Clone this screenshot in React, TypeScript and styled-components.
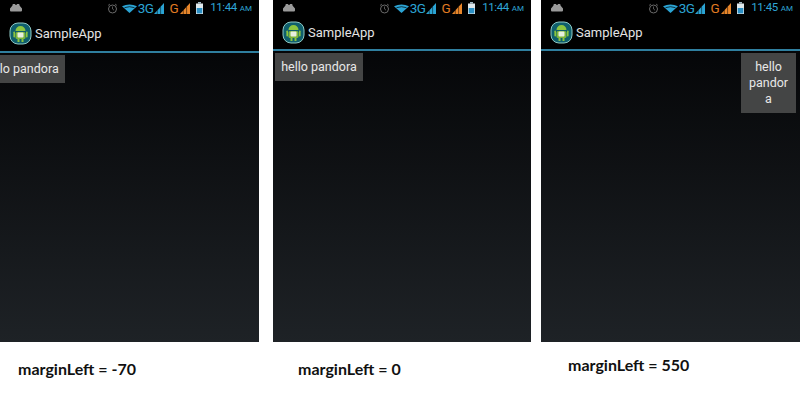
import React from 'react';
import styled, { createGlobalStyle } from 'styled-components';

const GlobalStyle = createGlobalStyle`
  html, body {
    margin: 0;
    padding: 0;
    background: #fff;
  }
`;

const Page = styled.div`
  width: 800px;
  height: 403px;
  overflow: hidden;
  display: flex;
  gap: 14px;
  background: #fff;
`;

const Column = styled.div<{ $width: number; $gap?: number }>`
  width: ${(p) => p.$width}px;
  flex: none;
  margin-right: ${(p) => p.$gap ?? 0}px;
`;

const Phone = styled.div`
  height: 342px;
  overflow: hidden;
  display: flex;
  flex-direction: column;
  background: #000;
  font-family: Roboto, 'Open Sans', sans-serif;
`;

const StatusBar = styled.div`
  height: 16px;
  flex: none;
  display: flex;
  align-items: center;
  padding: 0 7px 0 10px;
`;

const Bot = styled.svg`
  width: 12px;
  height: 8px;
  margin-right: auto;
`;

const StatusIcon = styled.svg<{ $left?: number }>`
  flex: none;
  margin-left: ${(p) => p.$left ?? 0}px;
`;

const NetLabel = styled.span<{ $color: string; $left: number }>`
  color: ${(p) => p.$color};
  font-size: 13.5px;
  line-height: 16px;
  letter-spacing: -0.5px;
  margin-left: ${(p) => p.$left}px;
`;

const Clock = styled.span`
  color: #2fa6d6;
  font-size: 11.5px;
  line-height: 16px;
  letter-spacing: -0.4px;
  margin-left: 7px;
`;

const Meridiem = styled.span`
  font-size: 8px;
  letter-spacing: 0;
  margin-left: 3px;
`;

const TitleBar = styled.div<{ $height: number; $left: number }>`
  height: ${(p) => p.$height}px;
  flex: none;
  display: flex;
  align-items: center;
  gap: 3px;
  padding-left: ${(p) => p.$left}px;
  border-bottom: 2px solid #2f7f9f;
  box-sizing: border-box;
`;

const Title = styled.span`
  color: #e4e4e4;
  font-size: 13px;
`;

const Content = styled.div`
  flex: 1;
  padding-top: 2px;
  background: linear-gradient(#050608, #1e2226);
`;

const Toast = styled.div<{ $left: number; $width: number }>`
  width: ${(p) => p.$width}px;
  margin-left: ${(p) => p.$left}px;
  box-sizing: border-box;
  padding: 6px 5px;
  background: #444545;
  color: #e8e8e8;
  font-size: 12.5px;
  line-height: 16px;
  text-align: center;
  overflow-wrap: anywhere;
`;

const Caption = styled.div<{ $top: number; $left: number }>`
  padding: ${(p) => p.$top}px 0 0 ${(p) => p.$left}px;
  font-family: Lato, 'Open Sans', sans-serif;
  font-weight: 700;
  font-size: 16px;
  line-height: 18px;
  color: #111;
`;

const AppLogo = () => (
  <svg width="23" height="23" viewBox="0 0 23 23">
    <rect x="1" y="1" width="21" height="21" rx="8" fill="#0f5f6c" stroke="#8fc9c4" strokeWidth="1" />
    <path d="M6.500 9a5 5 0 0 1 10 0z" fill="#8cc63f" />
    <rect x="6.500" y="10" width="10" height="7" rx="1.500" fill="#7db53a" />
    <rect x="8.500" y="10.500" width="6" height="5" rx="1" fill="#e8efe0" />
    <rect x="4.400" y="9.500" width="1.600" height="6" rx="0.800" fill="#8cc63f" />
    <rect x="17" y="9.500" width="1.600" height="6" rx="0.800" fill="#8cc63f" />
    <rect x="8.500" y="17" width="2" height="3" fill="#8cc63f" />
    <rect x="12.500" y="17" width="2" height="3" fill="#8cc63f" />
  </svg>
);

const StatusIcons = ({ time }: { time: string }) => (
  <StatusBar>
    <Bot viewBox="0 0 12 8">
      <path d="M2.500 1.500a1.500 1.500 0 0 1 3 -.5h1a1.500 1.500 0 0 1 3 .5l2.500 3v2a1 1 0 0 1-1 1H1a1 1 0 0 1-1-1v-2z" fill="#9a9a9a" />
    </Bot>
    <StatusIcon width="11" height="11" viewBox="0 0 11 11">
      <circle cx="5.500" cy="6" r="4" fill="none" stroke="#6b6b6b" strokeWidth="1" />
      <path d="M5.500 3.500V6l1.500 1.200M1 2.500 3 1M10 2.500 8 1" fill="none" stroke="#6b6b6b" strokeWidth="0.800" />
    </StatusIcon>
    <StatusIcon $left={4} width="15" height="9" viewBox="0 0 15 9">
      <path d="M0 2.200Q7.500-1.200 15 2.200L7.500 9z" fill="#2ba4d4" />
      <path d="M2.500 3.700Q7.500 1.700 12.500 3.700" fill="none" stroke="#000" strokeWidth="0.700" />
    </StatusIcon>
    <NetLabel $color="#2ba4d4" $left={1}>3G</NetLabel>
    <StatusIcon $left={1} width="10" height="11" viewBox="0 0 10 11">
      <path d="M0 11 10 0v11z" fill="#2ba4d4" />
      <path d="M3.300 11V7M6.600 11V4" stroke="#000" strokeWidth="0.500" />
    </StatusIcon>
    <NetLabel $color="#e07b22" $left={5}>G</NetLabel>
    <StatusIcon $left={2} width="10" height="11" viewBox="0 0 10 11">
      <path d="M0 11 10 0v11z" fill="#e8862a" />
      <path d="M3.300 11V7M6.600 11V4" stroke="#000" strokeWidth="0.500" />
    </StatusIcon>
    <StatusIcon $left={6} width="7" height="12" viewBox="0 0 7 12">
      <rect x="2" y="0" width="3" height="1.500" fill="#9fb8c4" />
      <rect x="0" y="1.500" width="7" height="10.500" fill="#dfe8ec" />
      <rect x="0.700" y="6" width="5.600" height="5.400" fill="#2b8fc4" />
    </StatusIcon>
    <Clock>
      {time}
      <Meridiem>AM</Meridiem>
    </Clock>
  </StatusBar>
);

const App = () => (
  <>
    <GlobalStyle />
    <Page>
      <Column $width={259}>
        <Phone>
          <StatusIcons time="11:44" />
          <TitleBar $height={37} $left={9}>
            <AppLogo />
            <Title>SampleApp</Title>
          </TitleBar>
          <Content>
            <Toast $left={-23} $width={88}>hello pandora</Toast>
          </Content>
        </Phone>
        <Caption $top={18} $left={18}>marginLeft = -70</Caption>
      </Column>
      <Column $width={258} $gap={-4}>
        <Phone>
          <StatusIcons time="11:44" />
          <TitleBar $height={35} $left={9}>
            <AppLogo />
            <Title>SampleApp</Title>
          </TitleBar>
          <Content>
            <Toast $left={2} $width={88}>hello pandora</Toast>
          </Content>
        </Phone>
        <Caption $top={18} $left={25}>marginLeft = 0</Caption>
      </Column>
      <Column $width={259}>
        <Phone>
          <StatusIcons time="11:45" />
          <TitleBar $height={35} $left={9}>
            <AppLogo />
            <Title>SampleApp</Title>
          </TitleBar>
          <Content>
            <Toast $left={200} $width={55}>hello pandora</Toast>
          </Content>
        </Phone>
        <Caption $top={14} $left={27}>marginLeft = 550</Caption>
      </Column>
    </Page>
  </>
);

export default App;
